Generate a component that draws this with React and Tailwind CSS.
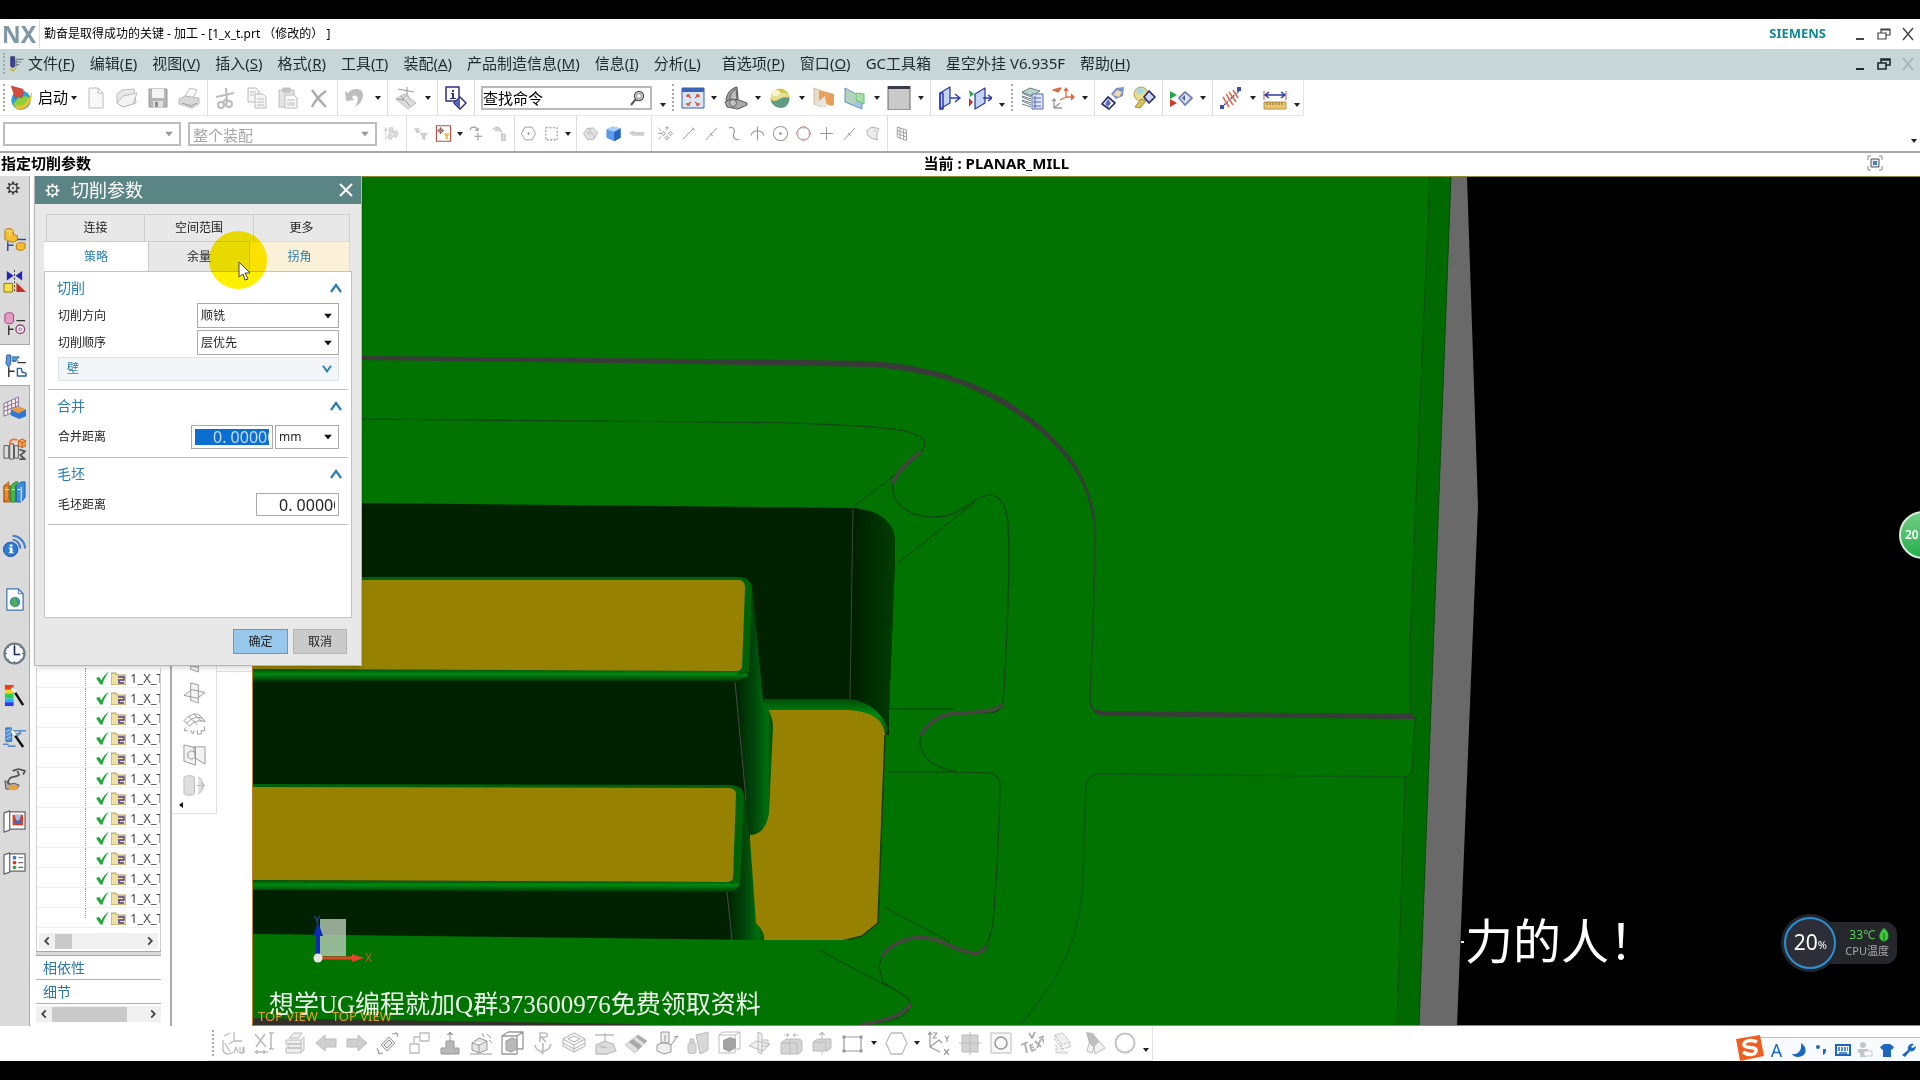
import React, { useState } from "react";
import clsx from "clsx";

const G = "#bcbcbc";
const D = "#999999";

// toolbar glyphs, all drawn on a 24x24 grid
const glyphs = {
  launch: (
    <>
      <circle cx="12" cy="14" r="9" fill="#2f9fd8" />
      <path d="M5 18c4-8 11-9 15-6-2 6-7 10-11 11z" fill="#8ccf3c" />
      <path d="M3 15c5 7 14 6 19-9 1 12-8 19-14 16" fill="#e7c22c" />
      <path d="M3 1l11 3-1 8-4-2-2 3z" fill="#d84a3c" stroke="#a93128" strokeWidth="0.5" />
    </>
  ),
  doc: <path d="M5 2h9l5 5v15H5zM14 2v5h5" fill="#f8f8f8" stroke={G} />,
  open: (
    <>
      <path d="M2 8l5-4 12-1 2 14-13 4-6-4z" fill="#e8e8e8" stroke={G} />
      <path d="M2 17l6-7 14-3-4 11-10 3z" fill="#f3f3f3" stroke={G} />
    </>
  ),
  save: (
    <>
      <path d="M3 3h18v18H3z" fill="#b5b5b5" stroke={D} />
      <path d="M6 3h12v9H6z" fill="#f4f4f4" />
      <path d="M7 15h10v6H7z" fill="#dedede" />
      <path d="M9 16h3v5H9z" fill="#8f8f8f" />
    </>
  ),
  print: (
    <>
      <path d="M8 10l5-8 7 2-4 8z" fill="#fafafa" stroke={G} />
      <path d="M2 13l6-3 14 2v6l-7 4-13-4z" fill="#d8d8d8" stroke={G} />
      <path d="M5 17l9 3 6-3" stroke="#999" fill="none" />
    </>
  ),
  cut: (
    <>
      <path d="M12 2l1 13M2 11l18-4M13 12l-4 4" stroke={G} strokeWidth="2" fill="none" />
      <circle cx="7" cy="19" r="3" fill="none" stroke={G} strokeWidth="2" />
      <circle cx="15" cy="18" r="3" fill="none" stroke={G} strokeWidth="2" />
    </>
  ),
  copy: (
    <>
      <path d="M3 2h8l3 3v11H3z" fill="#f5f5f5" stroke={G} />
      <path d="M10 8h8l3 3v11H10z" fill="#f5f5f5" stroke={G} />
      <path d="M5 6h6M5 9h4M12 13h7M12 16h7M12 19h7" stroke={G} />
    </>
  ),
  paste: (
    <>
      <path d="M3 4h15v17H3z" fill="#e4e4e4" stroke={G} />
      <path d="M7 2h7v4H7z" fill="#c4c4c4" stroke={G} />
      <path d="M9 9h9l3 3v10H9z" fill="#fafafa" stroke={G} />
      <path d="M11 14h8M11 17h8M11 19h8" stroke={G} />
    </>
  ),
  del: <path d="M5 4c4 6 8 11 14 17M19 5C13 9 8 15 5 21" stroke="#ababab" strokeWidth="2.4" fill="none" />,
  undo: <path d="M1 5l3 2c5-6 15-5 15 2 0 5-3 9-8 12 3-5 4-10 1-11-2-1-3 0-4 1l2 3-8 1z" fill="#bdbdbd" />,
  blank: (
    <>
      <path d="M4 3l16 3M13 1v9" stroke={D} />
      <path d="M2 13l8-5 12 9-8 6z" fill="#ddd" stroke={G} />
      <path d="M13 7l-5 8M13 7l3 7" stroke={G} />
      <path d="M7 10l9 10M2 13l8 1" stroke={D} />
    </>
  ),
  info: (
    <>
      <path d="M2 1h13v14H2z" fill="#fff" stroke="#2d2d85" strokeWidth="1.5" />
      <path d="M8 4h2v2H8zM7 7h3v5h2v1H6v-1h2V8H7z" fill="#2d2d85" />
      <path d="M16 11l6 6-6 6-6-6z" fill="#fff" stroke="#2d2d85" strokeWidth="1.5" />
      <path d="M16 12l-5 5 5 5z" fill="#4b62b8" />
    </>
  ),
  fit: (
    <>
      <path d="M1 2h22v20H1z" fill="#dbe6f4" stroke="#3b5ea8" />
      <path d="M1 2h22v4H1z" fill="#3b66b8" />
      <path d="M6 9l4 3M18 9l-4 3M6 19l4-3M18 19l-4-3M6 9h3M6 9v2M18 9h-3M18 9v2M6 19h3M6 19v-2M18 19h-3M18 19v-2" stroke="#d8573b" strokeWidth="1.4" />
    </>
  ),
  shell: (
    <>
      <path d="M2 14C3 6 8 2 13 1l1 12-7 4z" fill="#9a9a9a" stroke="#555" />
      <path d="M6 12c1-5 3-7 6-9l1 10-5 2z" fill="#bcbcbc" stroke="#666" />
      <path d="M1 16l6-3 8 1 8 3v2l-9 4-11-2z" fill="#a9a9a9" stroke="#555" />
      <circle cx="9" cy="17" r="3.5" fill="#c4c4c4" stroke="#666" />
    </>
  ),
  sphere: (
    <>
      <circle cx="12" cy="12" r="9.5" fill="#d3c74c" />
      <path d="M3 9c5-4 13-3 18 0-3 5-12 7-18 4z" fill="#e6e08e" />
      <path d="M2.500 13c3 4 6 2 9 0s7-2 10-1c0 6-4 10-8 10-5 0-10-3-11-9z" fill="#5f9c84" />
      <ellipse cx="8" cy="7" rx="4" ry="3" fill="#f8f4cf" />
    </>
  ),
  clip: (
    <>
      <path d="M2 2l8 3v16l-8-3z" fill="#e7dccb" stroke="#d0c0a8" />
      <path d="M7 4l15 4v11l-3 1L7 15z" fill="#e8a05a" />
      <path d="M7 15l6-5 2 12-11-3z" fill="#e9e4dc" />
    </>
  ),
  clip2: (
    <>
      <path d="M2 2l17 9v12L2 16z" fill="#a3c4e2" stroke="#6a93bb" />
      <path d="M13 7l8 1v10l-8-4z" fill="#a7e0a4" stroke="#6bbd6b" />
      <path d="M3 3l10 5-1 11-9-4z" fill="#b5d6b6" opacity="0.8" />
    </>
  ),
  pane: (
    <>
      <path d="M1 0h22v24H1z" fill="#c9c9c9" stroke="#666" />
      <path d="M1 0h22v3H1z" fill="#3c3c48" />
    </>
  ),
  exit: (
    <>
      <path d="M3 7l10-6v16L3 23z" fill="#c5d3f7" stroke="#2f3f8f" strokeWidth="1.3" />
      <path d="M3 7h3v16H3zM13 12h9M18 8l5 4-5 4" fill="none" stroke="#2c3bb0" strokeWidth="1.5" />
    </>
  ),
  exit2: (
    <>
      <path d="M1 4l5 4-4 3z" fill="#2ba34c" />
      <path d="M1 12l4 4-4 5z" fill="#c33" />
      <path d="M7 8l10-6v15L7 23z" fill="#c5d3f7" stroke="#2f3f8f" strokeWidth="1.3" />
      <path d="M15 12h8M20 9l4 3-4 3" fill="none" stroke="#2c3bb0" strokeWidth="1.5" />
    </>
  ),
  layers: (
    <>
      <path d="M2 6l8-4 10 3-8 5zM2 10l9 3M2 14l9 3M2 18l9 3M2 7l9 4M2 11l9 4M2 15l9 4" fill="#bcd4cf" stroke="#6c8484" />
      <path d="M12 8h11v15H12z" fill="#dfe6fb" stroke="#5768b5" />
      <path d="M14 11h2v2h-2zM14 15h2v2h-2zM14 19h2v2h-2zM17 12h4M17 16h4M17 20h4" stroke="#5768b5" fill="none" />
    </>
  ),
  wcs: (
    <>
      <path d="M2 4l8-2-3 4zM15 3v8M15 11h8M15 11l-6 3M13 5l2-3 2 3M20 8l3 3-3 3" stroke="#dd6a44" strokeWidth="1.300" fill="#dd6a44" />
      <path d="M3 13v9h8M3 22l6-5M1 15l2-2 2 2" stroke="#999" strokeWidth="1.3" fill="none" />
    </>
  ),
  op: (
    <>
      <path d="M10 8l5-6 8-1-1 9-7 3z" fill="#7c93cd" />
      <path d="M12 9l4-5 5 2-3 5z" fill="#f1d9a8" />
      <path d="M7 11l7 6-6 6-7-5z" fill="#fff" stroke="#2d2d6d" strokeWidth="1.7" />
      <path d="M7 13l3 4-3 4-3-3z" fill="#5a6db5" />
    </>
  ),
  op2: (
    <>
      <circle cx="9" cy="8" r="7" fill="#eadb8d" stroke="#b3a04d" />
      <path d="M4 3c4-2 8-1 9 3L6 9z" fill="#9fdcea" />
      <path d="M9 13l5 2-6 7-5-1z" fill="#d8c15e" stroke="#a48b32" />
      <path d="M17 5l6 6-6 6-5-6z" fill="#cdd4ef" stroke="#2d2d6d" strokeWidth="1.7" />
    </>
  ),
  path: (
    <>
      <path d="M1 5l7 4-7 4z" fill="#2ba34c" />
      <path d="M1 13l7 4-7 4z" fill="#cf3b2b" />
      <path d="M16 6l7 6-7 7-6-7z" fill="#dfe6fb" stroke="#7684b3" strokeWidth="1.8" />
      <path d="M16 9v6l-3-3z" fill="#445a9d" />
    </>
  ),
  comb: (
    <>
      <path d="M3 21L21 4" stroke="#3d4fae" strokeWidth="1.5" strokeDasharray="2 1" />
      <path d="M4 11l6 10M7 8l7 11M10 6l7 10M14 4l5 8" stroke="#e0684c" strokeWidth="1.5" />
      <path d="M18 1h4v4h-4zM1 19h4v4H1z" fill="#3d4fae" />
    </>
  ),
  ruler: (
    <>
      <path d="M1 5v9M23 5v9" stroke="#b55" />
      <path d="M3 9h18M6 6L2 9l4 3M18 6l4 3-4 3" fill="none" stroke="#2c3ba0" strokeWidth="1.5" />
      <path d="M1 16h22v7H1z" fill="#e8c66d" stroke="#b8934a" />
      <path d="M4 16v3M7 16v3M10 16v3M13 16v3M16 16v3M19 16v3" stroke="#8d6f33" />
    </>
  ),
  // selection bar
  asm: <path d="M4 3v18M1 8l3-3 3 3M9 4h5v7H9zM15 9c4-2 7 0 6 4s-4 6-6 3zM8 13c4-1 6 2 5 5s-5 3-6 0z" fill="#ddd" stroke={G} />,
  filt: <path d="M3 5l4 4 3-5M5 9c2 4 7 1 7-2M12 12h9l-3 4v5l-3-2v-3z" fill="#d2d2d2" stroke={G} />,
  snapbox: (
    <>
      <path d="M2 1h20v22H2z" fill="#fff" stroke="#b5534a" strokeWidth="1.6" />
      <path d="M8 3v10M3 8h10M5 8a3 3 0 016 0 3 3 0 01-6 0" fill="none" stroke="#7a4a4a" strokeWidth="1.2" />
      <path d="M12 12h9l-3 4v5l-3-2v-3z" fill="#e3b84c" />
    </>
  ),
  rotp: <path d="M3 7c1-5 9-6 11 1M14 8l-4-1M14 8l1-4M14 11v11M9 16h11" fill="none" stroke={D} strokeWidth="1.5" />,
  filt2: <path d="M3 7c1-5 9-6 11 1M6 9l5-6 4 7M15 10v12M15 13h5v9h-5" fill="#ddd" stroke={G} strokeWidth="1.4" />,
  hex: (
    <>
      <path d="M7 3h10l5 9-5 9H7l-5-9z" fill="none" stroke={D} strokeWidth="1.3" />
      <circle cx="12" cy="12" r="1.500" fill="#777" />
    </>
  ),
  marq: <path d="M4 4h16v17H4z" fill="none" stroke="#a98b8b" strokeWidth="1.5" strokeDasharray="3 2" />,
  rocks: <path d="M2 12l5-7 9-1 6 7-5 9-9 1zM7 11l8 1 3 7M9 4l4 6" fill="#e0e0e0" stroke={G} strokeWidth="1.4" />,
  cube: (
    <>
      <path d="M2 6l9-4 11 3v13l-9 5-11-5z" fill="#5b9ae6" />
      <path d="M2 6l9-4 11 3-9 5z" fill="#a9cef5" />
      <path d="M13 10l9-5v13l-9 5z" fill="#2a62c0" />
    </>
  ),
  plane: <path d="M1 11l6-3 3 2h13v5H7z" fill="#cfcfcf" />,
  pts: <path d="M2 4l4 4M2 12h4M2 20l4-4M14 2v5M12 4h5M9 9l3 3-3 3-3-3zM19 9l3 3-3 3-3-3zM14 15l3 3-3 3-3-3z" fill="#eee" stroke={D} strokeWidth="1.3" />,
  line: <path d="M4 20L19 5M17 4l4 3" stroke={D} strokeWidth="1.4" fill="none" />,
  mid: <path d="M4 21L20 4M10 11l4 5" stroke={D} strokeWidth="1.4" fill="none" />,
  curve: <path d="M4 4c7-2 9 2 7 8s2 10 8 8" stroke={D} strokeWidth="1.6" fill="none" />,
  cross: <path d="M12 2v20M3 15c1-5 5-7 9-7s8 2 9 7" stroke={D} strokeWidth="1.5" fill="none" />,
  circ: (
    <>
      <circle cx="12" cy="12" r="10" fill="none" stroke={D} strokeWidth="1.500" />
      <circle cx="12" cy="12" r="1.800" fill="#888" />
    </>
  ),
  quad: (
    <>
      <circle cx="12" cy="12" r="9" fill="none" stroke={D} strokeWidth="1.500" />
      <path d="M10 1h4v4h-4zM10 19h4v4h-4zM1 10h4v4H1zM19 10h4v4h-4z" fill="#d9b3b3" />
    </>
  ),
  plus: <path d="M12 3v18M3 12h18" stroke={D} strokeWidth="1.5" />,
  face: <path d="M4 8l7-5 10 2-3 8 1 8-8-2-6-5zM14 8h3" fill="#ececec" stroke={G} strokeWidth="1.500" />,
  grid: <path d="M6 3l13 4v15L6 17zM10 4v15M15 6v14M6 8l13 4M6 12l13 5" fill="none" stroke={D} strokeWidth="1.3" />,
  // resource bar
  gear: (
    <>
      <circle cx="12" cy="12" r="7" fill="none" stroke="currentColor" strokeWidth="2.400" />
      <path d="M12 1v4M12 19v4M1 12h4M19 12h4M4 4l3 3M17 17l3 3M20 4l-3 3M7 17l-3 3" stroke="currentColor" strokeWidth="3" />
      <circle cx="12" cy="12" r="1.600" fill="currentColor" />
    </>
  ),
  asmNav: (
    <>
      <path d="M2 2l5-2 4 3v4l4 1v5l-5 2-8-3z" fill="#f2bd32" stroke="#b57d12" />
      <path d="M2 2l5 2v5M7 4l4-1" stroke="#fbe49a" />
      <path d="M5 14v10M5 18h6M15 12h9" stroke="#2b4a9b" strokeWidth="1.5" />
      <path d="M14 17l4-2 5 1v5l-4 3-5-2z" fill="#f2bd32" stroke="#b57d12" />
    </>
  ),
  consNav: (
    <>
      <path d="M4 1l7 5-7 5zM20 1l-7 5 7 5z" fill="#2425b8" />
      <path d="M12 0v24" stroke="#333" strokeDasharray="2 2" />
      <path d="M1 14h9v9H1z" fill="#f5e04b" stroke="#8b7a10" />
      <path d="M14 13l10 10H14z" fill="#c4301c" />
    </>
  ),
  partNav: (
    <>
      <path d="M2 3c0-3 9-3 9 0v7c0 3-9 3-9 0z" fill="#e79ac7" stroke="#98447a" />
      <path d="M14 9h9M6 14v10M6 18h5" stroke="#333" strokeWidth="1.5" />
      <circle cx="18" cy="18" r="4.500" fill="#fff" stroke="#98447a" strokeWidth="1.500" />
      <circle cx="18" cy="18" r="1.500" fill="none" stroke="#98447a" />
    </>
  ),
  opNav: (
    <>
      <path d="M3 1h4v9l-2 4-3-4zM8 3h8l-4 4h-4M9 8l6-1" fill="#5b9ad8" stroke="#2d5f9d" />
      <path d="M14 9h9M5 14v10M5 18h6" stroke="#333" strokeWidth="1.500" />
      <path d="M14 15h4l1 4 4 1v3h-9z" fill="#fff" stroke="#2d5f9d" strokeWidth="1.500" />
    </>
  ),
  cutter: (
    <>
      <path d="M4 1h6v14l-3 3-3-3z" fill="#3d3f9a" stroke="#26285f" />
      <path d="M12 5h11M12 9h8M12 13h5M12 5v12" stroke="#6f7f88" strokeWidth="1.800" />
      <path d="M3 19l5 3 4-4" stroke="#c9b93c" strokeWidth="2.500" />
    </>
  ),
  mach: (
    <>
      <path d="M1 8l15-7v14L1 21zM1 12l15-6M1 16l15-6M5 6v13M9 4v13M13 3v13" fill="#fff3df" stroke="#7c6ba8" />
      <path d="M8 14l8-3 8 3v7l-7 3-9-4z" fill="#2f78d8" />
      <path d="M8 14l8-3 8 3-8 4z" fill="#ef9b3c" />
    </>
  ),
  plant: (
    <>
      <path d="M1 8h5v13H1zM7 6h4v16H7zM12 8h4v13h-4z" fill="#ddd" stroke="#555" />
      <path d="M7 5c1-4 4-4 8-3M7 5l2 2" stroke="#f1733a" strokeWidth="2" />
      <path d="M16 3l4-2 4 2v5l-4 2-4-2zM16 3l4 2v5M20 5l4-2" fill="#f6a55c" stroke="#c1611a" />
      <path d="M17 12l6 2-5 4 5 4h-6" fill="none" stroke="#555" strokeWidth="1.800" />
    </>
  ),
  books: (
    <>
      <path d="M1 6l5-4v18l-5 3zM1 6h6v17H1z" fill="#ef8b2f" stroke="#b45d13" />
      <path d="M8 6l5-4h3l-3 4v17H8z" fill="#47b749" stroke="#23802b" />
      <path d="M14 6l5-4h4v16l-4 5h-5z" fill="#3c8de0" stroke="#1e5ca6" />
      <path d="M19 7v16M2 10h4M9 10h3M15 10h3" stroke="#fff" />
    </>
  ),
  hd3d: (
    <>
      <circle cx="8" cy="16" r="7.500" fill="#2a7bd5" stroke="#1a4f9b" />
      <path d="M7 11h3v2H7zM6 14h4v5h1v1H6v-1h1v-4H6z" fill="#fff" />
      <path d="M10 6c4 0 8 4 8 9M10 2c7 0 13 6 13 13" fill="none" stroke="#4a80c8" strokeWidth="2.300" />
    </>
  ),
  web: (
    <>
      <path d="M4 1h12l5 5v17H4z" fill="#fff" stroke="#4574ab" strokeWidth="1.300" />
      <path d="M16 1v5h5" fill="none" stroke="#4574ab" />
      <circle cx="12.500" cy="14.500" r="5.500" fill="#3d8fb0" />
      <path d="M12 9c3 4 4 8 0 11-4-3-3-8 0-11z" fill="#57b04b" />
    </>
  ),
  clock: (
    <>
      <circle cx="12" cy="12" r="10.500" fill="#f5f8fc" stroke="#6f7a88" strokeWidth="2.200" />
      <path d="M12 4v9h6" fill="none" stroke="#222f55" strokeWidth="1.700" />
      <path d="M12 2v2M12 20v2M2 12h2M20 12h2M5 5l1 1M18 18l1 1M19 5l-1 1M6 18l-1 1" stroke="#555" />
    </>
  ),
  spectrum: (
    <>
      <path d="M2 1h9v5H2z" fill="#f03a20" />
      <path d="M2 6h9v4H2z" fill="#f9d423" />
      <path d="M2 10h9v5H2z" fill="#33cc4a" />
      <path d="M2 15h9v4H2z" fill="#24b8f0" />
      <path d="M2 19h9v4H2z" fill="#2b3df0" />
      <path d="M12 8l9 14" stroke="#111" strokeWidth="2.600" />
      <path d="M9 4l4 5" stroke="#fff" strokeWidth="2.500" />
    </>
  ),
  mill: (
    <>
      <path d="M3 2h6v14H3z" fill="#4f93d8" stroke="#2d64a8" />
      <path d="M3 6l6-3M3 10l6-3M3 14l6-3" stroke="#a9cdf0" />
      <path d="M10 5h14M10 8h9M19 5l-4 6M0 19h6M5 21h8" stroke="#5b8fc6" strokeWidth="1.600" />
      <path d="M12 9l9 13" stroke="#111" strokeWidth="2.600" />
      <path d="M9 5l4 5" stroke="#fff" strokeWidth="2.500" />
    </>
  ),
  robot: (
    <>
      <path d="M10 3l6-2 7 2-2 4M15 3l2 5M16 8l-8 2-3 4 3 5" fill="none" stroke="#555" strokeWidth="1.800" />
      <path d="M2 13l4 4 6-1 5 2-3 4H3z" fill="#aaa" stroke="#555" />
      <path d="M6 18h9v5H6z" fill="#e8a23c" />
    </>
  ),
  roleA: (
    <>
      <path d="M1 3l6-2v20l-6 2zM7 2h16v18H7z" fill="#fff" stroke="#666" strokeWidth="1.300" />
      <path d="M10 5h11v11H10z" fill="#d93c2a" />
      <path d="M12 5h7l-2 6h-3z" fill="#8fc6f2" />
      <path d="M12 11h7v3h-7z" fill="#3370c4" />
    </>
  ),
  roleB: (
    <>
      <path d="M1 3l6-2v20l-6 2zM7 2h16v18H7z" fill="#fff" stroke="#666" strokeWidth="1.300" />
      <circle cx="12" cy="6" r="2" fill="#3a7bd0" />
      <circle cx="12" cy="11" r="2" fill="#d93c2a" />
      <circle cx="12" cy="16" r="2" fill="#37a548" />
      <path d="M16 6h5M16 11h5M16 16h5" stroke="#666" strokeWidth="1.300" />
    </>
  ),
  // surface column
  sheets: <path d="M1 15l8-6 14 3-8 6zM8 2l8 2v19l-8-3z" fill="#eee" stroke={D} fillOpacity="0.6" />,
  mesh: <path d="M1 9C6 3 14 0 18 4l5 6c-7-2-13 0-16 5zM6 5l9 8M11 2l9 8M4 12c5-6 11-8 17-5M3 16l-2 3 4 1M22 15l1 4-4 1M8 19l2 4 2-4M15 19v4h4v-4" fill="none" stroke={D} />,
  boxes: <path d="M1 2l12 3v18L1 19zM11 4h12v18l-10-6zM5 10l4-2 4 2v5l-4 2-4-2z" fill="#eee" stroke={D} fillOpacity="0.7" />,
  cyl: <path d="M1 4c0-3 11-3 11 0v16c0 3-11 3-11 0zM14 12h8M19 9l4 3-4 3M16 3c6 3 7 14 0 18" fill="#d5d5d5" fillOpacity="0.8" stroke={G} />,
  // feature toolbar
  abs: <path d="M13 1v9h8M13 10l-5 3M3 5l6-3M2 9v10c1 5 8 5 10 2M4 12l5 9M13 22l2-6 2 6M19 16v6h3v-6M23 16v6" fill="none" stroke={G} strokeWidth="1.300" />,
  xdim: <path d="M3 3l11 13M13 3L4 16M19 2v16M17 2h5M17 18h5M2 21h14M5 19v4M12 19v4" fill="none" stroke={G} strokeWidth="1.600" />,
  list: <path d="M6 7l5-5h8l-3 5zM3 9h15v4H3zM5 13h13v4H5zM3 17h15v5H3zM18 9l3-3v13l-3 3" fill="#eee" stroke={G} />,
  left: <path d="M2 12l9-8v4h11v8H11v4z" fill="#cfcfcf" stroke={G} />,
  right: <path d="M22 12l-9-8v4H2v8h11v4z" fill="#cfcfcf" stroke={G} />,
  tool: <path d="M13 6l6 6-8 8-6-6zM13 9l3 3-5 5-3-3zM19 2l3 1-1 3M2 19l1 4 4-1M16 3l5-1M1 17l2 5" fill="#e9e9e9" stroke={D} />,
  squares: <path d="M13 2h9v8h-9zM3 13h9v9H3zM12 6H7v6" fill="#fff" stroke={G} strokeWidth="1.300" />,
  pad: <path d="M8 10h8v7h5v6H3v-6h5zM12 1v9M9 4l3-3 3 3" fill="#b7b7b7" stroke={D} />,
  house: <path d="M3 12l7-5 8 3v9l-8 3-7-3zM10 14v8M3 12l7 2 8-4M1 23h22M18 3l4 4M20 9l3 3M13 2l2 4" fill="#e4e4e4" stroke={D} />,
  boxin: (
    <>
      <path d="M2 5h15v18H2zM8 1h15v17h-6M2 5l6-4M17 5l6-4" fill="none" stroke={D} strokeWidth="1.300" />
      <path d="M6 10l6-3 5 2v9l-6 3-5-2z" fill="#b9b9b9" stroke={D} />
    </>
  ),
  hook: <path d="M4 14c1 8 13 9 16-1M12 12v10M8 19l4 4M9 11V2h5c3 0 3 4 0 4h-4l5 5" fill="none" stroke={G} strokeWidth="1.600" />,
  stack: <path d="M1 8l11-6 11 6-11 6zM1 8v7l11 6 11-6V8M6 8l6-3 6 3-6 3zM12 14v7M1 12l11 6 11-6" fill="none" stroke={G} strokeWidth="1.200" />,
  drill: <path d="M2 4h19M12 2v9M3 14l9-4 8 3 3 7-9 3H3zM6 15l8 2" fill="#dcdcdc" stroke={G} strokeWidth="1.300" />,
  slab: (
    <>
      <path d="M1 14L14 4l9 6-12 12z" fill="#a9a9a9" stroke={G} />
      <path d="M1 14l4-3 9 7-3 4zM9 8l3-2 9 7-3 2z" fill="#dedede" />
    </>
  ),
  note: <path d="M6 1h8v11H6zM10 4v6M2 14l7-3 7 3v7l-7 2-7-3zM16 14l7-9-4 1" fill="#eee" stroke={D} />,
  jar: <path d="M10 4l12-3v18l-8 4zM2 14c0-3 8-3 8 0v7c0 2-8 2-8 0zM4 12V8h4v4" fill="#d8d8d8" stroke={G} />,
  solid: (
    <>
      <path d="M2 4h16v18H2zM6 1h17v17h-5M2 4l4-3M18 4l5-3" fill="none" stroke={G} />
      <path d="M6 9l7-3 6 2v9l-7 4-6-3z" fill="#a3a3a3" />
    </>
  ),
  trim: <path d="M10 1l4 2v20l-4-2zM1 15l7-5 14 3-7 7zM14 9h6v6h-6" fill="#eee" stroke={G} />,
  split: <path d="M2 12l5-4h14l2 3v9l-4 3H2zM2 12h16v11M11 8v14M5 4h5M14 4h5M8 2l2 2-2 2M16 2l-2 2 2 2" fill="#d4d4d4" stroke={G} />,
  move: <path d="M3 11l5-3h13v9l-4 3H3zM12 1v7M9 4l3-3 3 3M12 20v4M3 11h13v9" fill="#d4d4d4" stroke={G} />,
  rect: <path d="M3 6h17v14H3zM2 5h2v2H2zM19 19h2v2h-2zM19 5h2v2h-2zM2 19h2v2H2z" fill="none" stroke={D} strokeWidth="1.200" />,
  bighex: <path d="M7 2h11l5 10-5 11H7L2 12z" fill="none" stroke={G} strokeWidth="1.300" />,
  zyx: <path d="M3 1v15l9-7 3 3M3 16l10 5M1 4l2-3 2 3M6 2h4L6 7h4M18 5l2 3 2-3M20 8v3M17 18l5 6M22 18l-5 6" fill="none" stroke={D} strokeWidth="1.200" />,
  hatch: <path d="M4 4h16v17H4zM1 12h22M12 1v23" fill="#d2d2d2" stroke={G} />,
  hole: (
    <>
      <path d="M2 2h20v20H2z" fill="#f8f8f8" stroke={G} />
      <circle cx="12" cy="12" r="6" fill="none" stroke={D} strokeWidth="1.500" />
    </>
  ),
  text3d: <path d="M1 14l7-3M5 13l2 9M9 15l4-2M10 14l2 6 4-2M11 17l3-1M15 10l6 6M21 8l-4 9M19 7l5-2M22 6l2 6M9 2l3 5 3-6" fill="none" stroke="#adadad" strokeWidth="1.800" />,
  dash: <path d="M4 4l8-2 7 9-8 3zM4 4v5l7 9v-4M11 18l8-2v-5M5 14v8h13" fill="#eee" stroke={G} strokeDasharray="2 1" />,
  lamp: (
    <>
      <path d="M4 1l7 1 6 8-5 6-5-4z" fill="#bdbdbd" />
      <path d="M7 12l5 4-2 6-5-2zM12 16l5-6 6 7-10 6z" fill="#f2f2f2" stroke={G} />
    </>
  ),
  ring: <circle cx="12" cy="12" r="9.500" fill="none" stroke="#c4c4c4" strokeWidth="2" />,
};

function Glyph({ name, className = "size-6" }) {
  return (
    <svg viewBox="0 0 24 24" fill="none" strokeLinejoin="round" className={clsx("block shrink-0", className)}>
      {glyphs[name]}
    </svg>
  );
}

function Caret({ low, width = "w-3", className }) {
  return (
    <span className={clsx("flex shrink-0 justify-center self-stretch", low ? "items-end pb-2" : "items-center", width, className)}>
      <svg viewBox="0 0 6 4" className="h-1 w-1.5">
        <path d="M0 0h6L3 4z" fill="#222" />
      </svg>
    </span>
  );
}

const Sep = () => (
  <span className="flex w-1.5 shrink-0 justify-center self-stretch">
    <span className="w-px bg-[#dedede]" />
  </span>
);

const Grip = () => (
  <span className="flex w-2 shrink-0 justify-center self-stretch py-1">
    <span className="border-l-2 border-dotted border-[#a8a8a8]" />
  </span>
);

// "|" separator, "v" caret, "_" low caret, ":" grip, anything else is a button
function Tools({ items, slot, icon, caret }) {
  return items.map((item, i) => {
    if (item === "|") return <Sep key={i} />;
    if (item === ":") return <Grip key={i} />;
    if (item === "v") return <Caret key={i} width={caret} />;
    if (item === "_") return <Caret key={i} width={caret} low />;
    return (
      <button key={i} type="button" aria-label={item} className={clsx("flex shrink-0 items-center justify-center", slot)}>
        <Glyph name={item} className={icon} />
      </button>
    );
  });
}

const menus = [
  ["文件", "F"],
  ["编辑", "E"],
  ["视图", "V"],
  ["插入", "S"],
  ["格式", "R"],
  ["工具", "T"],
  ["装配", "A"],
  ["产品制造信息", "M"],
  ["信息", "I"],
  ["分析", "L"],
  ["首选项", "P"],
  ["窗口", "O"],
  ["GC工具箱"],
  ["星空外挂 V6.935F"],
  ["帮助", "H"],
];

function WindowButtons({ inner }) {
  return (
    <div className={clsx("flex h-full items-center", inner ? "text-[#1c2b2b]" : "text-[#444]")}>
      <button type="button" aria-label="最小化" className="flex w-6 justify-center">
        <svg viewBox="0 0 14 14" className="size-3.5">
          <path d="M3 12h8" stroke="currentColor" strokeWidth="2" />
        </svg>
      </button>
      <button type="button" aria-label="还原" className="flex w-6 justify-center">
        <svg viewBox="0 0 14 14" className="size-3.5" fill="none" stroke="currentColor" strokeWidth={inner ? 1.6 : 1.2}>
          <path d="M1 6h8v6H1zM4 6V2h9v6H9M4 3h9" />
        </svg>
      </button>
      <button type="button" aria-label="关闭" className={clsx("flex w-6 justify-center", inner && "text-[#a3b1b1]")}>
        <svg viewBox="0 0 14 14" className="size-3.5">
          <path d="M2 1l10 12M12 1L2 13" stroke="currentColor" strokeWidth="1.400" />
        </svg>
      </button>
    </div>
  );
}

function Header() {
  return (
    <header>
      <div className="flex h-[30px] items-center bg-white pl-0.5">
        <span className="w-[38px] border-r border-[#dcdcdc] text-[23px] leading-7 font-bold text-[#7f98a5]">NX</span>
        <h1 className="ml-1 text-xs [text-spacing-trim:space-all]">勤奋是取得成功的关键 - 加工 - [1_x_t.prt （修改的） ]</h1>
        <span className="mr-[22px] ml-auto text-[13px] font-bold text-[#0d8a92]">SIEMENS</span>
        <WindowButtons />
      </div>
      <nav className="flex h-[31px] items-center bg-[#c7d6d7] pb-0.5 text-[15px] text-[#1d2b2d]">
        <span className="flex w-7 items-center self-stretch">
          <Grip />
          <Glyph name="cutter" className="size-4" />
        </span>
        {menus.map(([label, key]) => (
          <button key={label} type="button" className={clsx("mr-[15px] shrink-0", label === "首选项" && "ml-1.5")}>
            {label}
            {key && (
              <>
                (<u>{key}</u>)
              </>
            )}
          </button>
        ))}
        <div className="ml-auto h-full">
          <WindowButtons inner />
        </div>
      </nav>
      <div className="flex h-[36px] items-center bg-white">
        <div className="flex h-full items-center border-r border-b border-[#e4e4e4]">
          <Grip />
          <button type="button" className="flex h-full w-[72px] items-center gap-1 text-[15px]">
            <Glyph name="launch" className="size-[26px]" />
            启动
            <Caret className="-ml-1" />
          </button>
          <Tools
            slot="h-full w-[31px]"
            caret="w-[13px]"
            items={["doc", "open", "save", "print", "|", "cut", "copy", "paste", "del", "|", "undo", "v", "|", "blank", "v", "|", "info", "|"]}
          />
          <label className="mr-[5px] ml-1 flex h-6 w-[171px] items-center border-2 border-[#b9b9b9] bg-white pr-1">
            <input aria-label="查找命令" defaultValue="查找命令" className="w-0 flex-1 text-[15px] leading-5 outline-none" />
            <svg viewBox="0 0 16 16" className="size-4" fill="none" stroke="#555" strokeWidth="1.400">
              <circle cx="9" cy="6" r="4.500" />
              <circle cx="9" cy="6" r="2.500" stroke="#aaa" />
              <path d="M6 9l-5 6" strokeWidth="2" />
            </svg>
          </label>
          <Tools
            slot="h-full w-[31px]"
            caret="w-[12px]"
            items={["_", ":", "fit", "v", "shell"]}
          />
          <Tools
            slot="h-full w-[31px]"
            caret="w-[13px]"
            items={["v", "sphere", "v", "clip", "clip2", "v", "pane", "v", "|", "exit", "exit2", "_", ":", "layers", "wcs", "v", "|", "op", "op2", "|", "path", "v", "|", "comb", "v", "ruler", "_"]}
          />
        </div>
      </div>
      <div className="flex h-[37px] items-center border-b-2 border-[#a6a6a6] bg-white pl-[3px]">
        <SelectBox label="类型过滤器" options={[" "]} className="h-6 w-[178px] border-2 border-[#bdbdbd]" muted />
        <SelectBox label="选择范围" options={["整个装配"]} className="mr-[3px] ml-[7px] h-6 w-[189px] border-2 border-[#bdbdbd] text-[15px]" muted />
        <Tools
          slot="h-full w-[23px]"
          icon="size-[17px]"
          caret="w-[10px]"
          items={["asm", "|", "filt", "snapbox", "v", "rotp", "filt2", "|", "hex", "marq", "v", "|", "rocks", "cube", "plane", "|", "pts", "line", "mid", "curve", "cross", "circ", "quad", "plus", "mid", "face", "|", "grid"]}
        />
        <div className="ml-auto h-full">
          <Caret low className="h-full" />
        </div>
      </div>
      <div className="flex h-[23px] items-center bg-white pb-1 text-[15px] leading-[18px] font-semibold">
        <p className="w-[48%] pl-px">指定切削参数</p>
        <p className="pl-0.5 font-bold">当前 : PLANAR_MILL</p>
        <button type="button" aria-label="全屏" className="mr-[37px] ml-auto">
          <svg viewBox="0 0 16 16" className="size-4" fill="none" stroke="#888">
            <path d="M1 5V1h3M12 1h3v4M15 11v4h-3M4 15H1v-4" />
            <path d="M4 4h8v8H4z" stroke="#555" fill="#dfe8f2" />
            <path d="M6 6h4v4H6z" fill="#4d7fb5" stroke="none" />
          </svg>
        </button>
      </div>
    </header>
  );
}

function SelectBox({ label, id, options, className, muted }) {
  return (
    <div className={clsx("relative shrink-0 bg-white", className)}>
      <select
        id={id}
        aria-label={id ? undefined : label}
        className={clsx("h-full w-full appearance-none pl-[3px] outline-none", muted && "text-[#a5a5a5]")}
      >
        {options.map((o) => (
          <option key={o}>{o}</option>
        ))}
      </select>
      <svg viewBox="0 0 8 5" className="pointer-events-none absolute top-1/2 right-1.5 h-[5px] w-2 -translate-y-1/2">
        <path d="M0 0h8L4 5z" fill={muted ? "#999" : "#111"} />
      </svg>
    </div>
  );
}

const resources = [
  ["asmNav"],
  ["consNav"],
  ["partNav"],
  ["opNav"],
  ["mach"],
  ["plant"],
  ["books"],
  ["hd3d", true],
  ["web", true],
  ["clock", true],
  ["spectrum"],
  ["mill"],
  ["robot"],
  ["roleA"],
  ["roleB"],
];

function ResourceBar() {
  return (
    <aside className="flex w-[30px] shrink-0 flex-col border-r border-[#a9a9a9] bg-[#dadada]">
      <button type="button" aria-label="资源条选项" className="mb-[18px] flex h-6 items-center pl-1.5 text-[#333]">
        <Glyph name="gear" className="size-3.5" />
      </button>
      {resources.map(([name, spaced]) => (
        <button
          key={name}
          type="button"
          aria-label={name}
          className={clsx(
            "flex h-[42px] shrink-0 items-center justify-center",
            spaced && "mt-3",
            name === "opNav" && "-mr-px border-y border-[#a9a9a9] bg-white"
          )}
        >
          <Glyph name={name} className="size-[23px]" />
        </button>
      ))}
    </aside>
  );
}

function HScroll({ thumb }) {
  return (
    <div className="flex h-4 items-center bg-[#f0f0f0] text-[#444]">
      <svg viewBox="0 0 18 16" className="h-4 w-4 shrink-0" fill="none" stroke="currentColor" strokeWidth="2">
        <path d="M11 4L7 8l4 4" />
      </svg>
      <span className={clsx("h-[15px] bg-[#c9c9c9]", thumb)} />
      <svg viewBox="0 0 18 16" className="ml-auto h-4 w-4 shrink-0" fill="none" stroke="currentColor" strokeWidth="2">
        <path d="M7 4l4 4-4 4" />
      </svg>
    </div>
  );
}

function Navigator() {
  return (
    <section className="flex w-[142px] shrink-0 flex-col justify-end border-r-2 border-[#adadad] bg-white pr-[9px] pb-1 pl-1.5">
      <div className="border-x border-[#cfcfcf]">
        <ul>
          {Array.from({ length: 13 }, (_, i) => (
            <li key={i} className="flex h-5 items-center overflow-hidden border-b border-[#efefef] pl-[48px] text-[13px] leading-5 whitespace-nowrap text-[#444]">
              <span
                className={clsx("w-[11px] shrink-0 border-l border-dotted border-[#999]", i === 12 ? "h-2.5 self-start" : "h-5")}
              />
              <svg viewBox="0 0 12 12" className="h-3.5 w-[13px] shrink-0">
                <path d="M0 6l3-1 2 3c2-4 4-6 7-8-3 4-5 8-6 12H4z" fill="#25a83f" />
              </svg>
              <svg viewBox="0 0 15 14" className="mr-1 ml-0.5 h-3.5 w-[15px] shrink-0">
                <path d="M0 2h5l1 2h9v10H0z" fill="#f0e0a0" stroke="#b39b54" />
                <path d="M7 6h6v3H8v3h5M7 9h4" fill="none" stroke="#4b3d95" strokeWidth="1.300" />
              </svg>
              1_X_T
            </li>
          ))}
        </ul>
        <div className="mx-0.5 mt-[5px] mb-0.5">
          <HScroll thumb="w-[17px]" />
        </div>
      </div>
      <div className="h-[5px] border-y border-[#a8a8a8] bg-[#d9d9d9]" />
      <button type="button" className="h-6 border-b border-[#b0b0b0] pl-[7px] text-left text-sm text-[#2c77a3]">
        相依性
      </button>
      <button type="button" className="mb-0.5 h-6 border-b border-[#b0b0b0] pl-[7px] text-left text-sm text-[#2c77a3]">
        细节
      </button>
      <HScroll thumb="w-[75px]" />
    </section>
  );
}

function SurfaceTools() {
  return (
    <div className="flex w-[80px] shrink-0 items-start bg-white">
      <div className="flex h-[638px] w-[45px] flex-col items-center justify-end border-r border-b border-[#e2e2e2]">
        <Tools slot="h-[31px] w-full" items={["sheets", "sheets", "mesh", "boxes", "cyl"]} icon="size-[23px]" />
        <svg viewBox="0 0 4 6" className="mb-1 ml-[7px] h-2 w-1 self-start">
          <path d="M4 0v6L0 3z" fill="#111" />
        </svg>
      </div>
      <div className="h-[496px] flex-1 border-b border-[#e2e2e2]" />
    </div>
  );
}

function Model() {
  return (
    <svg viewBox="252 176 1668 850" preserveAspectRatio="xMinYMin slice" className="absolute inset-0 h-full w-full">
      <defs>
        <linearGradient id="wall" x1="0" x2="1">
          <stop offset="0" stopColor="#001e00" />
          <stop offset="1" stopColor="#003d02" />
        </linearGradient>
        <linearGradient id="post" x1="0" x2="1">
          <stop offset="0" stopColor="#002200" />
          <stop offset="0.5" stopColor="#00470a" />
          <stop offset="0.85" stopColor="#00700f" />
          <stop offset="1" stopColor="#004a06" />
        </linearGradient>
        <linearGradient id="rim" x1="0" x2="0" y1="0" y2="1">
          <stop offset="0" stopColor="#004d05" />
          <stop offset="0.4" stopColor="#008a12" />
          <stop offset="1" stopColor="#003a03" />
        </linearGradient>
      </defs>
      <path d="M252 176h1668v850H252z" fill="#000" />
      <path d="M1451 176h16l11 330-21 520h-38z" fill="#696969" />
      <path d="M252 176h1178l-20 464v73l5 5-3 55-7 4-8 249H252z" fill="#007300" />
      <path d="M1430 176h21l-32 850h-22l8-249 7-4 3-55-5-5v-73z" fill="#006a00" stroke="#0d4f10" />

      <path d="M362 356L700 359C780 360 840 360 870 361C905 363 940 371 968 382C1010 398 1050 428 1074 462C1088 485 1094 505 1095 520L1092 518C1090 500 1085 485 1071 465C1048 432 1008 404 965 386C938 376 905 369 870 367L700 364L362 360z" fill="#3a3a3a" />
      <path d="M1094 515C1097 560 1092 640 1090 703Q1092 713 1104 713" stroke="#1d4a22" strokeWidth="1.300" fill="none" />
      <path d="M1090 703l4 6 8 2 310 3 3 5-311-3q-12-1-14-13z" fill="#3a3a3a" />
      <path d="M1405 777L1102 774Q1087 774 1086 786Q1084 830 1083 873C1082 920 1072 965 1022 1023" stroke="#0c5a14" strokeWidth="1.300" fill="none" />

      <path d="M362 419L700 422C800 422 880 426 905 431Q925 436 925 443C922 460 905 460 893 483C890 500 905 517 933 517C965 517 970 496 990 495Q1005 496 1008 522Q1011 580 1003 703Q1000 712 990 713H953Q925 722 920 740Q920 765 957 772L990 773Q999 775 1000 785Q999 850 993 923Q988 952 976 954C955 954 945 937 918 937Q883 942 879 967L883 982L908 998Q914 1008 901 1017Q880 1024 860 1025" stroke="#17451a" strokeWidth="1.200" fill="none" />
      <path d="M921 452Q900 466 893 483M1002 704Q998 713 953 713Q930 718 921 735M986 946Q980 955 972 953C950 950 945 938 918 937Q890 942 882 957M911 1003Q904 1018 860 1025" stroke="#474442" strokeWidth="3.500" fill="none" />
      <path d="M853 507L895 475M898 563L975 502M889 709H953M887 772H957M884 907L950 942M804 942L889 987" stroke="#0d4410" fill="none" />

      <path d="M252 502L853 508Q893 512 895 540V560L889 710V735H752V940H252z" fill="#002200" />
      <path d="M853 508Q893 512 895 540V560L888 735L850 700z" fill="url(#wall)" />
      <path d="M853 508l-3 192" stroke="#3a4a3a" fill="none" />
      <path d="M764 699H850Q880 704 888 730L885 740L764 720z" fill="url(#rim)" />
      <path d="M750 710H850Q884 713 885 735L878 923L862 936L843 941H750z" fill="#968200" />
      <path d="M764 940H843L862 936L878 923L886 735h3L884 942z" fill="#007300" />
      <path d="M885 735L878 923L862 936L843 941" stroke="#143d0a" strokeWidth="1.500" fill="none" />

      <path d="M735 681L752 587L763 700Q773 715 773 727L769 813Q766 834 750 835L744 800z" fill="url(#post)" />
      <path d="M252 669H742L749 676L738 681H252z" fill="url(#rim)" />
      <path d="M252 577H740Q751 578 752 588L749 672L738 676L738 580H252z" fill="#006208" />
      <path d="M252 580H740Q745 581 745 588L742 667Q741 671 736 671L252 669z" fill="#968200" />
      <path d="M252 682H735L746 800H252z" fill="#002200" />
      <path d="M735 682L746 800" stroke="#4a4a4a" fill="none" />

      <path d="M727 892L744 793L750 840L756 923Q765 932 764 940H730z" fill="url(#post)" />
      <path d="M252 880L738 882L740 885L733 892L252 890z" fill="url(#rim)" />
      <path d="M252 784L732 785Q743 787 744 795L740 884L730 884V790L252 788z" fill="#006208" />
      <path d="M252 787L730 788Q736 789 736 794L733 878Q732 882 727 882L252 880z" fill="#968200" />
      <path d="M252 891L727 892L732 940L252 935z" fill="#002200" />
      <path d="M727 892L732 940" stroke="#4a4a4a" fill="none" />
      <path d="M252 934L764 940H850V950H252z" fill="#007300" />
      <path d="M252 1018L640 1024V1026H252z" fill="#33302c" />

      <path d="M320 919h26v37h-26z" fill="#b9ccb9" opacity="0.8" />
      <path d="M318 957V930" stroke="#0b2bb0" strokeWidth="4" />
      <path d="M318 922l5 14h-10z" fill="#0b2bb0" />
      <path d="M320 958h34" stroke="#e8432a" strokeWidth="3" />
      <path d="M364 958l-12-4v8z" fill="#e8432a" />
      <circle cx="318" cy="958" r="4.500" fill="#e5e5e5" />
      <path d="M1461 941h3v2h-3z" fill="#eee" />
      <path d="M252.500 176v849.500H1920" stroke="#b3842a" fill="none" />
      <path d="M252 176.500h1668" stroke="#8a8a2a" fill="none" />
    </svg>
  );
}

function Viewport() {
  return (
    <main className="relative flex-1 overflow-hidden bg-black">
      <Model />
      <span className="absolute bottom-[58px] left-[113px] text-xs leading-5 text-[#c25a2c]">X</span>
      <span className="absolute bottom-[98px] left-[62px] text-[11px] leading-4 text-[#2a4cc0]">Y</span>
      <p className="absolute bottom-0.5 left-1.5 flex gap-3.5 text-[13px] leading-4 whitespace-nowrap text-[#e0a030]">
        <span>TOP VIEW</span>
        <span>TOP VIEW</span>
      </p>
      <p className="absolute bottom-[5px] left-[17px] font-['Liberation_Serif','Noto_Sans_CJK_SC',serif] text-[25px] leading-8 whitespace-nowrap text-[#eef5ee]">
        想学UG编程就加Q群373600976免费领取资料
      </p>
      <p className="absolute right-[263px] bottom-[55px] text-5xl leading-[60px] whitespace-nowrap text-white [text-spacing-trim:space-all]">
        力的人！
      </p>
      <div className="absolute right-[23px] bottom-[54px] flex h-[58px] items-center">
        <div className="ml-[28px] flex h-[42px] flex-col justify-center rounded-xl bg-[#26272d] pr-2 pl-9 text-[11px] leading-4 text-[#a9a9a9]">
          <p className="flex items-center gap-1 pl-1 text-xs leading-4 text-[#55d455]">
            33℃
            <svg viewBox="0 0 10 14" className="h-3.5 w-2.5">
              <path d="M5 0c4 3 6 8 3 12L5 14 2 12C-2 8 2 3 5 0z" fill="#38c838" />
              <path d="M5 14V5" stroke="#1c5f1c" />
            </svg>
          </p>
          <p className="whitespace-nowrap">CPU温度</p>
        </div>
        <div className="absolute left-0 flex size-[58px] items-center justify-center rounded-full bg-[#22262c]">
          <div className="flex size-[52px] items-center justify-center rounded-full border-2 border-[#2b8fd6] bg-[#2d2e38] text-white">
            <span className="text-[21px]">20</span>
            <span className="mt-1 text-[11px]">%</span>
          </div>
        </div>
      </div>
      <div className="absolute top-[335px] -right-[27px] flex size-12 items-center rounded-full border-2 border-[#d8f0dc] bg-gradient-to-b from-[#6fce84] to-[#1fae4e] pl-1 text-xs font-semibold text-white">
        20
      </div>
    </main>
  );
}

function Section({ title, children }) {
  return (
    <section className="mx-[3px] border-b border-[#bdbdbd] pr-[9px] pl-2.5">
      <h3 className="-mr-[3px] -ml-px flex h-[31px] items-center justify-between text-sm text-[#2b7fae]">
        {title}
        <svg viewBox="0 0 12 10" className="h-2.5 w-3" fill="none" stroke="currentColor" strokeWidth="2.200">
          <path d="M1 9l5-7 5 7" />
        </svg>
      </h3>
      {children}
    </section>
  );
}

const tabRows = [
  [
    ["连接", "w-[98px]"],
    ["空间范围", "w-[109px]"],
    ["更多", "flex-1"],
  ],
  [
    ["策略", "w-[105px]"],
    ["余量", "w-[101px]"],
    ["拐角", "flex-1"],
  ],
];

function CuttingDialog() {
  const [tab, setTab] = useState("策略");

  return (
    <div
      role="dialog"
      aria-label="切削参数"
      className="absolute top-0 left-[34px] flex h-[490px] w-[328px] flex-col border border-t-0 border-[#b5b5b5] bg-[#e8e8e8] text-xs text-[#222] shadow-md"
    >
      <div className="flex h-[28px] items-center bg-[#5b8585] pr-2 pl-2.5 text-white">
        <Glyph name="gear" className="size-[15px]" />
        <h2 className="ml-[11px] text-lg leading-6">切削参数</h2>
        <button type="button" aria-label="关闭" className="ml-auto">
          <svg viewBox="0 0 14 14" className="size-3.5" stroke="currentColor" strokeWidth="2">
            <path d="M1 1l12 12M13 1L1 13" />
          </svg>
        </button>
      </div>
      <div className="mt-2.5 mr-[11px] ml-[9px]">
        {tabRows.map((row, i) => (
          <div key={i} className={clsx("flex", i === 0 ? "ml-0.5 h-[27px] border-l border-[#cccccc]" : "h-[30px]")}>
            {row.map(([name, width]) => (
              <button
                key={name}
                type="button"
                onClick={() => setTab(name)}
                className={clsx(
                  "border-t border-r",
                  width,
                  name === "拐角" ? "border-[#f0d9a8] bg-[#fbf0d8] text-[#2b7fae]" : "border-[#cccccc]",
                  tab === name && "bg-white text-[#2b7fae]"
                )}
              >
                {name}
              </button>
            ))}
          </div>
        ))}
      </div>
      <div className="mx-[9px] flex-1 border border-[#c4c4c4] bg-white">
        <Section title="切削">
          <div className="flex flex-col gap-0.5 pb-2">
            <div className="flex h-[25px] items-center justify-between">
              <label htmlFor="dir">切削方向</label>
              <SelectBox id="dir" options={["顺铣"]} className="h-[25px] w-[142px] border border-[#a9a9a9]" />
            </div>
            <div className="flex h-[25px] items-center justify-between">
              <label htmlFor="order">切削顺序</label>
              <SelectBox id="order" options={["层优先"]} className="h-[25px] w-[142px] border border-[#a9a9a9]" />
            </div>
            <button
              type="button"
              className="flex h-6 items-center justify-between border border-[#dde2e6] bg-[#f3f6f9] pr-1.5 pl-2 text-[#2b7fae]"
            >
              壁
              <svg viewBox="0 0 12 10" className="h-2 w-2.5" fill="none" stroke="currentColor" strokeWidth="2.400">
                <path d="M1 1l5 7 5-7" />
              </svg>
            </button>
          </div>
        </Section>
        <Section title="合并">
          <div className="mt-1 mb-2 flex h-6 items-center gap-0.5">
            <label htmlFor="merge" className="mr-auto">
              合并距离
            </label>
            <span className="flex h-6 w-[82px] border border-[#a9a9a9] bg-white p-[3px]">
              <input
                id="merge"
                defaultValue="0. 00000"
                className="w-full bg-[#0a6fd0] pl-[18px] text-base leading-4 text-[#c4ddf7] outline-none"
              />
            </span>
            <SelectBox label="单位" options={["mm"]} className="h-6 w-16 border border-[#a9a9a9] text-xs" />
          </div>
        </Section>
        <Section title="毛坯">
          <div className="mt-1 mb-2 flex h-[23px] items-center justify-between">
            <label htmlFor="blank">毛坯距离</label>
            <input
              id="blank"
              defaultValue="0. 00000"
              className="h-[23px] w-[83px] border border-[#a9a9a9] bg-white pr-[3px] pl-[22px] text-base leading-5 outline-none"
            />
          </div>
        </Section>
      </div>
      <div className="flex h-[47px] items-center justify-end gap-[5px] pr-3.5">
        <button type="button" className="h-[25px] w-[55px] border border-[#5a9bc8] bg-[#97c8ec]">
          确定
        </button>
        <button type="button" className="h-[25px] w-[54px] border border-[#b5b5b5] bg-[#cacaca]">
          取消
        </button>
      </div>
    </div>
  );
}

function Pointer() {
  return (
    <div className="pointer-events-none absolute top-[55px] left-[209px]">
      <div className="size-[58px] rounded-full bg-[#fff000] mix-blend-multiply" />
      <svg viewBox="0 0 14 20" className="absolute top-[30px] left-[29px] h-5 w-3.5">
        <path d="M1 1v15l4-3 2 6 3-1-3-6h5z" fill="#fff" stroke="#444" />
      </svg>
    </div>
  );
}

function ImeBar() {
  return (
    <div className="mt-auto ml-auto flex h-6 items-center border-t border-[#b9c0cc] bg-[#f7faff] text-[#1d68bd]">
      <svg viewBox="0 0 30 28" className="-mt-1 -ml-5 h-7 w-[30px]">
        <path d="M1 5L25 1l4 21-24 5z" fill="#ee5f22" />
        <path d="M22 8c-6-3-14-1-13 3s13 1 12 6-9 4-13 1" fill="none" stroke="#fff" strokeWidth="3.500" />
      </svg>
      <span className="w-[23px] text-center text-lg leading-5">A</span>
      <span className="flex w-[22px] justify-center">
        <svg viewBox="0 0 14 14" className="size-3.5">
          <path d="M9 0c7 4 6 14-3 14-3 0-5-1-6-3 6 1 10-3 9-11z" fill="currentColor" />
        </svg>
      </span>
      <span className="flex w-[22px] justify-center">
        <svg viewBox="0 0 14 14" className="size-3.5">
          <circle cx="4" cy="4" r="2" fill="currentColor" />
          <path d="M9 6h3c0 4-1 5-3 6z" fill="currentColor" />
        </svg>
      </span>
      <span className="flex w-[22px] justify-center">
        <svg viewBox="0 0 16 12" className="h-3 w-4" fill="none" stroke="currentColor">
          <path d="M1 1h14v10H1z" strokeWidth="2" />
          <path d="M3 4h10M3 6h10" strokeWidth="1.500" strokeDasharray="2 1" />
          <path d="M4 9h8" strokeWidth="1.500" />
        </svg>
      </span>
      <span className="flex w-[22px] justify-center">
        <svg viewBox="0 0 16 16" className="size-4">
          <circle cx="6" cy="3" r="3" fill="#c3c7cd" />
          <path d="M1 7h10v4H9v4H3v-4H1z" fill="#c3c7cd" />
          <path d="M7 9h8v5H7z" fill="#fff" stroke="#c3c7cd" />
        </svg>
      </span>
      <span className="flex w-[22px] justify-center">
        <svg viewBox="0 0 14 14" className="size-3.5">
          <path d="M4 1h6l4 3-2 3-1-1v8H3V6L2 7 0 4z" fill="currentColor" />
        </svg>
      </span>
      <span className="flex w-[22px] justify-center">
        <svg viewBox="0 0 14 14" className="size-3.5">
          <path d="M12 1L9 4l2 1 3-2c0 4-3 6-6 5l-5 6-3-2 6-5c-1-4 2-7 6-6z" fill="currentColor" />
        </svg>
      </span>
    </div>
  );
}

export default function App() {
  return (
    <div className="flex h-screen flex-col overflow-hidden bg-black py-[19px] font-['Noto_Sans','Noto_Sans_CJK_SC',sans-serif] text-black">
      <Header />
      <div className="relative flex min-h-0 flex-1">
        <ResourceBar />
        <Navigator />
        <SurfaceTools />
        <Viewport />
        <CuttingDialog />
        <Pointer />
      </div>
      <footer className="flex h-[35px] shrink-0 bg-white">
        <div className="ml-[209px] flex h-full items-center border-r border-b border-[#e4e4e4]">
          <Tools
            slot="h-full w-[31px]"
            items={[":", "abs", "xdim", "list", "left", "right", "tool", "squares", "pad", "house", "boxin", "hook", "stack", "drill", "slab", "note", "jar", "solid", "trim", "split", "move", "rect", "v", "bighex", "v", "zyx", "hatch", "hole", "text3d", "dash", "lamp", "ring", "_"]}
          />
        </div>
        <ImeBar />
      </footer>
    </div>
  );
}
